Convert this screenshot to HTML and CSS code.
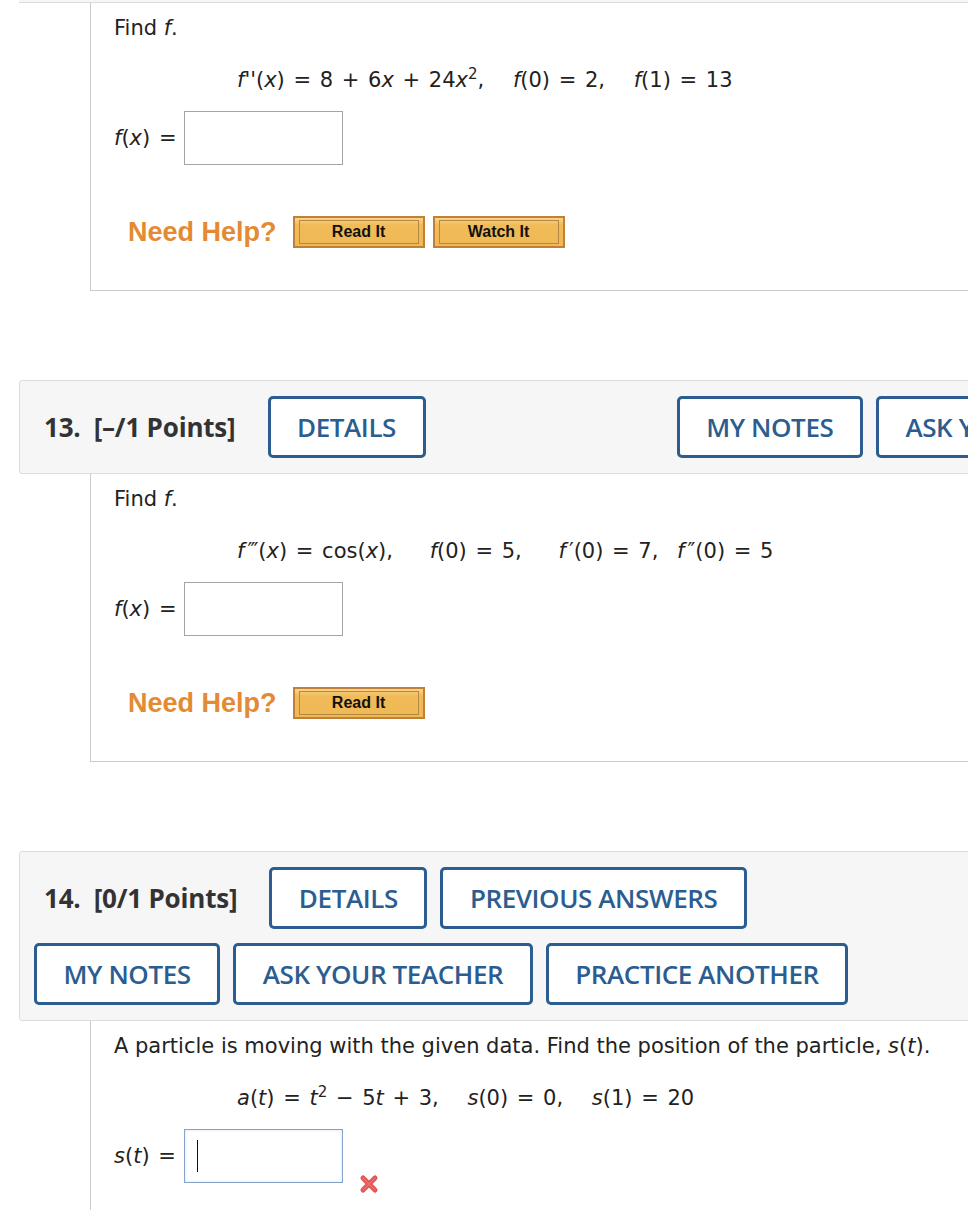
FILE: index.html
```html
<!DOCTYPE html>
<html lang="en">
<head>
    <meta charset="UTF-8">
    <title>Assignment Questions</title>
    <link rel="stylesheet" href="styles.css">
</head>
<body>
    <div class="page">
        <!-- end of question 12 -->
        <div class="qhead-tail"></div>
        <div class="qbody">
            <p class="prompt">Find <i>f</i>.</p>
            <p class="eq">
                <span><i>f</i>''(<i>x</i>) = 8 + 6<i>x</i> + 24<i>x</i><sup>2</sup>,</span>
                <span class="sep"><i>f</i>(0) = 2,</span>
                <span class="sep"><i>f</i>(1) = 13</span>
            </p>
            <div class="answer">
                <span class="answer-label"><i>f</i>(<i>x</i>) =</span>
                <span class="field"></span>
            </div>
            <div class="help">
                <span class="help-label">Need Help?</span>
                <button class="help-btn"><span>Read It</span></button>
                <button class="help-btn"><span>Watch It</span></button>
            </div>
        </div>

        <!-- question 13 -->
        <div class="qhead">
            <div class="qhead-left">
                <span class="qnum">13.&nbsp; [–/1 Points]</span>
                <button class="qbtn">DETAILS</button>
            </div>
            <div class="qhead-right">
                <button class="qbtn">MY NOTES</button>
                <button class="qbtn">ASK YOUR TEACHER</button>
                <button class="qbtn">PRACTICE ANOTHER</button>
            </div>
        </div>
        <div class="qbody">
            <p class="prompt">Find <i>f</i>.</p>
            <p class="eq">
                <span><i>f</i><span class="prime">‴</span>(<i>x</i>) = cos(<i>x</i>),</span>
                <span class="sep wide"><i>f</i>(0) = 5,</span>
                <span class="sep wide"><i>f</i><span class="prime">′</span>(0) = 7,</span>
                <span class="sep tight"><i>f</i><span class="prime">″</span>(0) = 5</span>
            </p>
            <div class="answer">
                <span class="answer-label"><i>f</i>(<i>x</i>) =</span>
                <span class="field"></span>
            </div>
            <div class="help">
                <span class="help-label">Need Help?</span>
                <button class="help-btn"><span>Read It</span></button>
            </div>
        </div>

        <!-- question 14 -->
        <div class="qhead">
            <div class="qhead-left">
                <span class="qnum">14.&nbsp; [0/1 Points]</span>
                <button class="qbtn">DETAILS</button>
                <button class="qbtn">PREVIOUS ANSWERS</button>
            </div>
            <div class="qhead-right">
                <button class="qbtn">MY NOTES</button>
                <button class="qbtn">ASK YOUR TEACHER</button>
                <button class="qbtn">PRACTICE ANOTHER</button>
            </div>
        </div>
        <div class="qbody qbody-open">
            <p class="prompt">A particle is moving with the given data. Find the position of the particle, <i>s</i>(<i>t</i>).</p>
            <p class="eq">
                <span><i>a</i>(<i>t</i>) = <i>t</i><sup>2</sup> − 5<i>t</i> + 3,</span>
                <span class="sep"><i>s</i>(0) = 0,</span>
                <span class="sep"><i>s</i>(1) = 20</span>
            </p>
            <div class="answer">
                <span class="answer-label"><i>s</i>(<i>t</i>) =</span>
                <span class="field field-focus"><span class="caret"></span></span>
                <svg class="wrong" width="22" height="22" viewBox="0 0 22 22">
                    <path d="M5 5 L17 17 M17 5 L5 17" stroke="#e25252" stroke-width="5" stroke-linecap="round"/>
                    <path d="M5 5 L17 17 M17 5 L5 17" stroke="#f08080" stroke-width="1.5" stroke-linecap="round" opacity="0.7"/>
                </svg>
            </div>
        </div>
    </div>
</body>
</html>
```

FILE: styles.css
```css
html, body {
    overflow: hidden;
}

body {
    margin: 0;
    padding: 0;
    background-color: #fff;
    font-family: "DejaVu Sans", Verdana, sans-serif;
    font-size: 21px;
    color: #222;
}

.page {
    width: 1488px;
    margin-left: 19px;
}

/* question header bar */
.qhead-tail {
    height: 2px;
    background-color: #f6f6f6;
    border-bottom: 1px solid #dcdcdc;
}

.qhead {
    display: flex;
    flex-wrap: wrap;
    justify-content: space-between;
    row-gap: 14px;
    background-color: #f6f6f6;
    border: 1px solid #dcdcdc;
    border-radius: 3px;
    padding: 15px 15px 15px 14px;
    margin-top: 89px;
}

.qhead-left,
.qhead-right {
    display: flex;
    align-items: center;
    gap: 13px;
}

.qnum {
    font-family: "Open Sans", sans-serif;
    font-weight: 700;
    font-size: 26px;
    letter-spacing: -0.2px;
    color: #333;
    margin-left: 10px;
    margin-right: 19px;
    white-space: pre;
}

.qbtn {
    height: 62px;
    padding: 0 26.5px;
    background-color: #fff;
    border: 3px solid #2b5d91;
    border-radius: 5px;
    font-family: "Open Sans", sans-serif;
    font-weight: 600;
    font-size: 26px;
    letter-spacing: -0.4px;
    color: #2b5d91;
    white-space: nowrap;
}

/* question body */
.qbody {
    margin-left: 71px;
    border-left: 1px solid #cccccc;
    border-bottom: 1px solid #cccccc;
    padding: 13px 0 42px 23px;
}

.qbody-open {
    border-bottom: none;
    padding-bottom: 60px;
}

.prompt {
    margin: 0;
    line-height: 24px;
}

.eq {
    margin: 28px 0 0 123px;
    line-height: 24px;
    word-spacing: 2px;
}

.eq sup {
    font-size: 15px;
    line-height: 0;
}

.prime {
    padding-left: 3px;
}

.sep {
    margin-left: 20px;
}

.sep.wide {
    margin-left: 28px;
}

.sep.tight {
    margin-left: 10px;
}

.answer {
    display: flex;
    align-items: center;
    margin-top: 19px;
}

.answer-label {
    width: 70px;
    word-spacing: 2px;
}

.field {
    display: block;
    width: 157px;
    height: 52px;
    border: 1px solid #a5a5a5;
    background-color: #fff;
}

.field-focus {
    position: relative;
    border-color: #86a3c9;
    box-shadow: inset 0 0 3px #cfe0f3;
}

.caret {
    position: absolute;
    left: 12px;
    top: 10px;
    width: 1px;
    height: 32px;
    background-color: #111;
}

.wrong {
    align-self: flex-end;
    margin: 0 0 -12px 15px;
}

/* need help */
.help {
    display: flex;
    align-items: center;
    margin: 51px 0 0 14px;
}

.help-label {
    font-family: "Liberation Sans", Arial, sans-serif;
    font-weight: 700;
    font-size: 27px;
    color: #e38a32;
    margin-right: 16px;
}

.help-btn {
    width: 132px;
    height: 32px;
    padding: 0;
    margin-right: 8px;
    background: linear-gradient(#f9d58c, #f0bb58 25%, #efb955);
    border: 2px solid #c27f38;
    border-radius: 0;
}

.help-btn span {
    display: flex;
    align-items: center;
    justify-content: center;
    height: 22px;
    margin: 2px 4px;
    border: 1px solid #b58744;
    font-family: "Liberation Sans", Arial, sans-serif;
    font-weight: 700;
    font-size: 16px;
    color: #111;
}
```
